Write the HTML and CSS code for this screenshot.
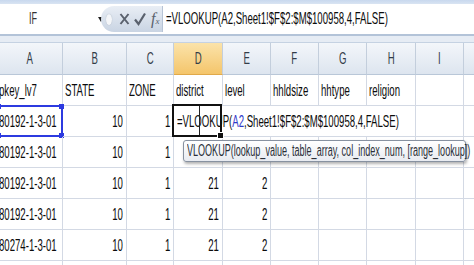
FILE: index.html
```html
<!DOCTYPE html>
<html>
<head>
<meta charset="utf-8">
<link rel="stylesheet" href="styles.css">
</head>
<body>
<div class="app">
  <div class="topstrip"></div>
  <div class="fbar">
    <div class="namebox"><span class="sq">IF</span><span class="dd"></span></div>
    <div class="pill">
      <span class="dot"></span>
      <svg class="ic" width="11" height="14" viewBox="0 0 11 14"><path d="M1.5 2 L9.5 12 M9.5 2 L1.5 12" stroke="#5a616d" stroke-width="2" fill="none"/></svg>
      <svg class="ic" width="12" height="14" viewBox="0 0 12 14"><path d="M1 7.5 L4.5 12 L11 1.5" stroke="#5a616d" stroke-width="2.2" fill="none"/></svg>
      <span class="fx"><i>f</i><span class="x">x</span></span>
    </div>
    <div class="formula"><span class="sq">=VLOOKUP(A2,Sheet1!$F$2:$M$100958,4,FALSE)</span></div>
  </div>
  <div class="band"></div>
  <div class="sheet">
    <div class="hd"><span class="sq c">A</span></div>
    <div class="hd"><span class="sq c">B</span></div>
    <div class="hd"><span class="sq c">C</span></div>
    <div class="hd act"><span class="sq c">D</span></div>
    <div class="hd"><span class="sq c">E</span></div>
    <div class="hd"><span class="sq c">F</span></div>
    <div class="hd"><span class="sq c">G</span></div>
    <div class="hd"><span class="sq c">H</span></div>
    <div class="hd"><span class="sq c">I</span></div>
    <div class="hd"></div>

    <div class="cl"><span class="sq">pkey_lv7</span></div>
    <div class="cl"><span class="sq">STATE</span></div>
    <div class="cl"><span class="sq">ZONE</span></div>
    <div class="cl"><span class="sq">district</span></div>
    <div class="cl"><span class="sq">level</span></div>
    <div class="cl"><span class="sq">hhldsize</span></div>
    <div class="cl"><span class="sq">hhtype</span></div>
    <div class="cl"><span class="sq">religion</span></div>
    <div class="cl"></div>
    <div class="cl"></div>

    <div class="cl ref"><span class="sq">80192-1-3-01</span><span class="rbox"><i class="h tl"></i><i class="h tr"></i><i class="h bl"></i><i class="h br"></i></span></div>
    <div class="cl n"><span class="sq r">10</span></div>
    <div class="cl n"><span class="sq r">1</span></div>
    <div class="cl edit"><span class="sq">=VLOOKUP(<b class="blue">A2</b>,Sheet1!$F$2:$M$100958,4,FALSE)</span><span class="abox"><i class="caret"></i><i class="fill"></i></span></div>
    <div class="cl"></div>
    <div class="cl"></div>

    <div class="cl"><span class="sq">80192-1-3-01</span></div>
    <div class="cl n"><span class="sq r">10</span></div>
    <div class="cl n"><span class="sq r">1</span></div>
    <div class="cl"></div>
    <div class="cl"></div>
    <div class="cl"></div><div class="cl"></div><div class="cl"></div><div class="cl"></div><div class="cl"></div>

    <div class="cl"><span class="sq">80192-1-3-01</span></div>
    <div class="cl n"><span class="sq r">10</span></div>
    <div class="cl n"><span class="sq r">1</span></div>
    <div class="cl n"><span class="sq r">21</span></div>
    <div class="cl n"><span class="sq r">2</span></div>
    <div class="cl"></div><div class="cl"></div><div class="cl"></div><div class="cl"></div><div class="cl"></div>

    <div class="cl"><span class="sq">80192-1-3-01</span></div>
    <div class="cl n"><span class="sq r">10</span></div>
    <div class="cl n"><span class="sq r">1</span></div>
    <div class="cl n"><span class="sq r">21</span></div>
    <div class="cl n"><span class="sq r">2</span></div>
    <div class="cl"></div><div class="cl"></div><div class="cl"></div><div class="cl"></div><div class="cl"></div>

    <div class="cl"><span class="sq">80274-1-3-01</span></div>
    <div class="cl n"><span class="sq r">10</span></div>
    <div class="cl n"><span class="sq r">1</span></div>
    <div class="cl n"><span class="sq r">21</span></div>
    <div class="cl n"><span class="sq r">2</span></div>
    <div class="cl"></div><div class="cl"></div><div class="cl"></div><div class="cl"></div><div class="cl"></div>

    <div class="cl"></div><div class="cl"></div><div class="cl"></div><div class="cl"></div><div class="cl"></div>
    <div class="cl"></div><div class="cl"></div><div class="cl"></div><div class="cl"></div><div class="cl"></div>

    <div class="tip"><span class="sq">VLOOKUP(lookup_value, table_array, col_index_num, [range_lookup])</span></div>
  </div>
</div>
</body>
</html>
```

FILE: styles.css
```css
html, body { margin: 0; padding: 0; }
body {
  width: 474px;
  height: 265px;
  overflow: hidden;
  background: #fff;
  font-family: "Liberation Sans", Arial, sans-serif;
  color: #0c0c0c;
}
.app { width: 474px; height: 265px; overflow: hidden; }
.sq {
  display: inline-block;
  white-space: nowrap;
  transform: scaleX(0.565);
  transform-origin: left center;
}
.sq.r { transform-origin: right center; }
.sq.c { transform-origin: center center; }

.topstrip { height: 4px; background: linear-gradient(#c8d8ee, #d9e4f2); }
.fbar {
  display: flex;
  height: 30px;
  background: #fff;
  border-bottom: 2px solid #b3c3d8;
}
.namebox {
  width: 101px;
  display: flex;
  align-items: center;
  font-size: 16px;
  color: #333;
  padding-left: 29px;
  box-sizing: border-box;
}
.dd {
  margin-left: 55px;
  width: 0; height: 0;
  border-left: 3px solid transparent;
  border-right: 3px solid transparent;
  border-top: 5px solid #222;
}
.pill {
  width: 62px;
  flex-shrink: 0;
  margin: 2px 0;
  display: flex;
  align-items: center;
  gap: 4px;
  padding-left: 5px;
  box-sizing: border-box;
  border-radius: 14px 0 0 14px;
  background: linear-gradient(#e9eef5, #c9d4e3);
  border-right: 1px solid #b7c4d6;
}
.dot {
  width: 6px; height: 11px;
  margin-right: 3px;
  border-radius: 50%;
  background: #f4f6f9;
  box-shadow: 0 0 1px #9aa6b5;
}
.ic { display: block; flex-shrink: 0; }
.fx {
  font-family: "Liberation Serif", serif;
  font-size: 16px;
  color: #5a616d;
  display: flex;
  align-items: baseline;
  margin-left: 1px;
}
.fx i { font-style: italic; }
.fx .x { font-size: 9px; font-style: italic; }
.formula {
  flex: 1;
  display: flex;
  align-items: center;
  padding-left: 3px;
  font-size: 17px;
  color: #0c0c0c;
}
.band { height: 6px; background: #e6ecf4; border-bottom: 1px solid #c5d2e2; }

.sheet {
  position: relative;
  margin-left: -3px;
  display: grid;
  grid-template-columns: 66px 64px 47px 49px 48px 48px 48px 49px 48px 80px;
  grid-template-rows: 32px repeat(7, 31px);
}
.hd {
  box-sizing: border-box;
  display: flex;
  align-items: center;
  justify-content: center;
  font-size: 17px;
  color: #333c48;
  background: linear-gradient(#f3f6fa, #dde5ef);
  border-right: 1px solid #c3cedc;
  border-bottom: 1px solid #b9c7d8;
}
.hd.act {
  background: linear-gradient(#fbe3aa, #f4c56b);
  border-bottom-color: #e0a94a;
}
.cl {
  box-sizing: border-box;
  position: relative;
  display: flex;
  align-items: center;
  padding: 2px 2px 0 2px;
  font-size: 17px;
  border-right: 1px solid #d3d9e4;
  border-bottom: 1px solid #d3d9e4;
  white-space: nowrap;
}
.cl.n { justify-content: flex-end; padding-right: 3px; }
.cl.edit {
  grid-column: span 5;
  padding-left: 3px;
  z-index: 2;
}
.blue { font-weight: normal; color: #3038c8; }
.rbox {
  position: absolute;
  left: 0; top: -1px; right: -1px; bottom: -1px;
  border: 2px solid #2c3ae0;
}
.h {
  position: absolute;
  width: 5px; height: 5px;
  background: #2c3ae0;
}
.h.tl { left: -3px; top: -3px; }
.h.tr { right: -3px; top: -3px; }
.h.bl { left: -3px; bottom: -3px; }
.h.br { right: -3px; bottom: -3px; }
.abox {
  position: absolute;
  left: -2px; top: -2px;
  width: 50px; height: 33px;
  border: 2px solid #111;
  box-sizing: border-box;
}
.caret {
  position: absolute;
  left: 25px; top: 0; bottom: 0;
  width: 1px;
  background: #222;
}
.fill {
  position: absolute;
  right: -4px; bottom: -4px;
  width: 5px; height: 5px;
  background: #111;
  border: 1px solid #fff;
}
.tip {
  position: absolute;
  left: 186px; top: 97px;
  width: 283px; height: 22px;
  box-sizing: border-box;
  display: flex;
  align-items: center;
  padding-left: 3px;
  font-size: 16px;
  color: #2a2f38;
  background: linear-gradient(#ffffff, #e8ebf1);
  border: 1px solid #8791a0;
  border-radius: 3px;
  box-shadow: 1px 2px 3px rgba(0,0,0,0.3);
  z-index: 3;
}
```
